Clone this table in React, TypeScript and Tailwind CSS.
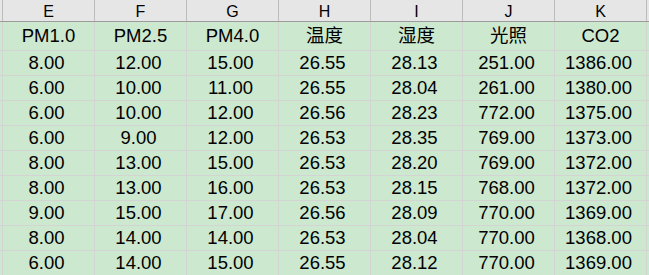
const cols = ["E", "F", "G", "H", "I", "J", "K"]
const labels = ["PM1.0", "PM2.5", "PM4.0", "温度", "湿度", "光照", "CO2"]
const rows = [
    ["8.00", "12.00", "15.00", "26.55", "28.13", "251.00", "1386.00"],
    ["6.00", "10.00", "11.00", "26.55", "28.04", "261.00", "1380.00"],
    ["6.00", "10.00", "12.00", "26.56", "28.23", "772.00", "1375.00"],
    ["6.00", "9.00", "12.00", "26.53", "28.35", "769.00", "1373.00"],
    ["8.00", "13.00", "15.00", "26.53", "28.20", "769.00", "1372.00"],
    ["8.00", "13.00", "16.00", "26.53", "28.15", "768.00", "1372.00"],
    ["9.00", "15.00", "17.00", "26.56", "28.09", "770.00", "1369.00"],
    ["8.00", "14.00", "14.00", "26.53", "28.04", "770.00", "1368.00"],
    ["6.00", "14.00", "15.00", "26.55", "28.12", "770.00", "1369.00"],
]

const font = { fontFamily: '"Liberation Sans", Arial, "Noto Sans CJK SC", sans-serif' }

const App = () => {
    return (
        <div className="w-[649px] h-[275px] overflow-hidden bg-[#cce8cf] text-black" style={font}>
            {/* column letters */}
            <div className="flex h-[22px] bg-[#e6e6e6] border-b border-[#9c9c9c]">
                <div className="w-[3px] border-r border-[#bcbcbc]" />
                {cols.map((c) => (
                    <div key={c} className="w-[92px] flex items-center justify-center pt-[2px] border-r border-[#bcbcbc] text-[16px] leading-none">
                        {c}
                    </div>
                ))}
                <div className="flex-1" />
            </div>

            {/* labels */}
            <div className="flex h-[29px] border-b border-[#d4d4d4]">
                <div className="w-[3px] border-r border-[#d4d4d4]" />
                {labels.map((l) => (
                    <div key={l} className="w-[92px] flex items-center justify-center pt-[1px] border-r border-[#d4d4d4] text-[18.5px] leading-none">
                        {l}
                    </div>
                ))}
                <div className="flex-1" />
            </div>

            {rows.map((r, i) => (
                <div key={i} className="flex h-[25px] border-b border-[#d4d4d4]">
                    <div className="w-[3px] border-r border-[#d4d4d4]" />
                    {r.map((v, j) => (
                        <div key={j} className="w-[92px] flex items-center justify-center pr-[4px] pt-[1px] border-r border-[#d4d4d4] text-[18.5px] leading-none">
                            {v}
                        </div>
                    ))}
                    <div className="flex-1" />
                </div>
            ))}
        </div>
    )
}

export default App
